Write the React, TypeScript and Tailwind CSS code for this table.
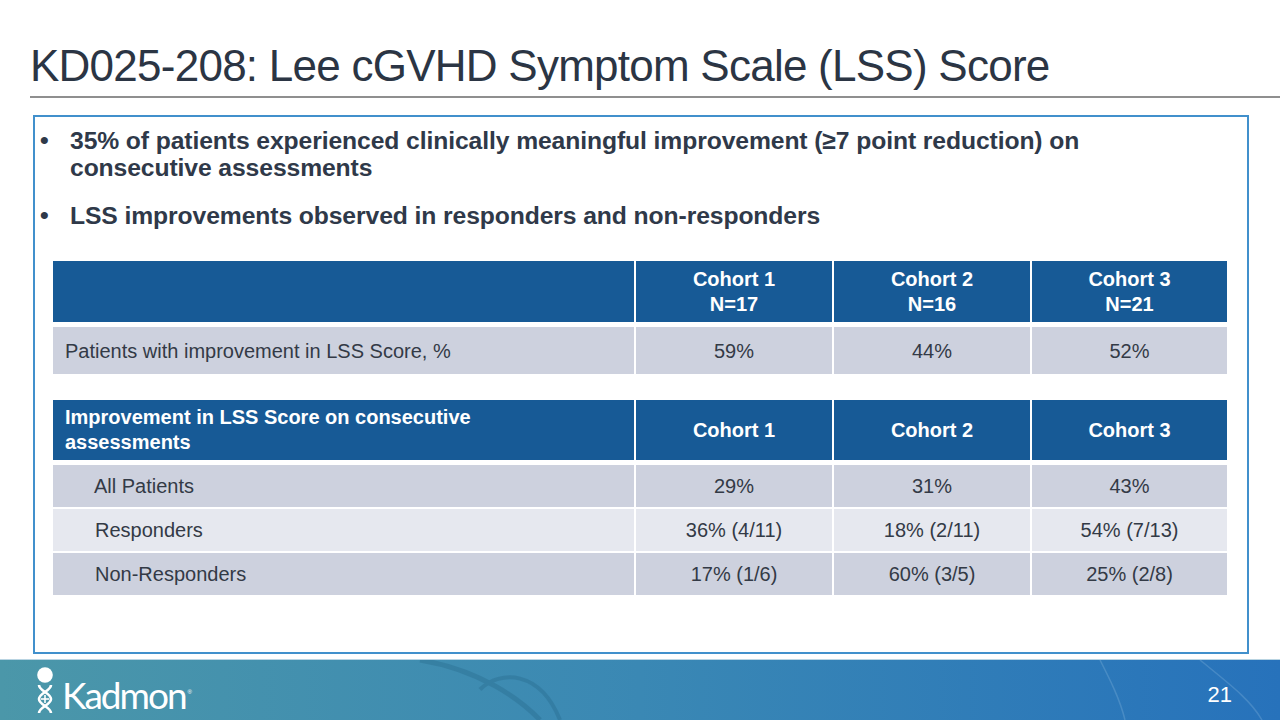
import React from 'react';

const font = { fontFamily: '"Liberation Sans", Arial, sans-serif' };

function KadmonLogo() {
  return (
    <div className="flex items-end gap-[9px]">
      <svg width="16" height="46" viewBox="0 0 16 46" fill="none">
        <circle cx="8" cy="8" r="7.8" fill="white" />
        <path d="M2 18 C2 24, 14 26, 14 32 C14 38, 2 40, 2 46" stroke="white" strokeWidth="2.6" />
        <path d="M14 18 C14 24, 2 26, 2 32 C2 38, 14 40, 14 46" stroke="white" strokeWidth="2.6" />
        <line x1="4" y1="32" x2="12" y2="32" stroke="white" strokeWidth="1.6" />
        <line x1="8" y1="28" x2="8" y2="36" stroke="white" strokeWidth="1.6" />
      </svg>
      <div className="flex items-start">
        <span
          className="text-[37px] leading-none text-white font-normal tracking-[-2px]"
          style={{ fontFamily: 'Lato, "Liberation Sans", sans-serif' }}
        >
          Kadmon
        </span>
        <span className="text-[6px] text-white mt-[12px] ml-[2px]">®</span>
      </div>
    </div>
  );
}

function Cell({ children, className = '' }: { children: React.ReactNode; className?: string }) {
  return <div className={`flex items-center ${className}`}>{children}</div>;
}

export default function App() {
  const cols = 'grid grid-cols-[581px_196px_196px_195px] gap-x-[2px]';
  const rows2 = [
    { label: 'All Patients', vals: ['29%', '31%', '43%'], bg: 'bg-[#cdd1de]', pad: 'pl-[41px]' },
    { label: 'Responders', vals: ['36% (4/11)', '18% (2/11)', '54% (7/13)'], bg: 'bg-[#e6e8ef]', pad: 'pl-[42px]' },
    { label: 'Non-Responders', vals: ['17% (1/6)', '60% (3/5)', '25% (2/8)'], bg: 'bg-[#cdd1de]', pad: 'pl-[42px]' },
  ];

  return (
    <div className="w-[1280px] h-[720px] bg-white flex flex-col overflow-hidden" style={font}>
      {/* title */}
      <div className="pl-[30px] pt-[44px]">
        <h1 className="text-[44px] leading-[44px] text-[#2b3544] tracking-[-0.75px]">
          KD025-208: Lee cGVHD Symptom Scale (LSS) Score
        </h1>
      </div>
      <div className="ml-[30px] mt-[8px] h-[2px] bg-[#8f8f8f]" />

      {/* content box */}
      <div className="ml-[33px] mt-[17px] w-[1216px] h-[539px] border-2 border-[#4190cc] pl-[18px] pt-[10px]">
        <ul className="text-[24.7px] font-bold text-[#2f3949] leading-[27px] -ml-[15px] tracking-[-0.1px]">
          <li className="flex">
            <span className="w-[32px] pl-[2px]">•</span>
            <span>
              35% of patients experienced clinically meaningful improvement (≥7 point reduction) on
              <br />
              consecutive assessments
            </span>
          </li>
          <li className="flex mt-[21px]">
            <span className="w-[32px] pl-[2px]">•</span>
            <span>LSS improvements observed in responders and non-responders</span>
          </li>
        </ul>

        {/* table 1 */}
        <div className="mt-[32px] text-[20px] text-[#333a46]">
          <div className={`${cols} h-[61px] text-white font-bold leading-[25px]`}>
            <div className="bg-[#175a96]" />
            {[
              ['Cohort 1', 'N=17'],
              ['Cohort 2', 'N=16'],
              ['Cohort 3', 'N=21'],
            ].map(([a, b]) => (
              <Cell key={a} className="bg-[#175a96] flex-col justify-center text-center">
                <span>{a}</span>
                <span>{b}</span>
              </Cell>
            ))}
          </div>
          <div className={`${cols} h-[47px] mt-[5px]`}>
            <Cell className="bg-[#cdd1de] pl-[12px]">Patients with improvement in LSS Score, %</Cell>
            {['59%', '44%', '52%'].map((v) => (
              <Cell key={v} className="bg-[#cdd1de] justify-center">
                {v}
              </Cell>
            ))}
          </div>
        </div>

        {/* table 2 */}
        <div className="mt-[26px] text-[20px] text-[#333a46] flex flex-col gap-y-[2px]">
          <div className={`${cols} h-[60px] text-white font-bold leading-[25px] mb-[3px]`}>
            <Cell className="bg-[#175a96] pl-[12px]">
              Improvement in LSS Score on consecutive
              <br />
              assessments
            </Cell>
            {['Cohort 1', 'Cohort 2', 'Cohort 3'].map((c) => (
              <Cell key={c} className="bg-[#175a96] justify-center">
                {c}
              </Cell>
            ))}
          </div>
          {rows2.map((r) => (
            <div key={r.label} className={`${cols} h-[42px]`}>
              <Cell className={`${r.bg} ${r.pad}`}>{r.label}</Cell>
              {r.vals.map((v, i) => (
                <Cell key={i} className={`${r.bg} justify-center`}>
                  {v}
                </Cell>
              ))}
            </div>
          ))}
        </div>
      </div>

      {/* footer */}
      <div className="mt-[5px] flex-1 relative bg-gradient-to-r from-[#4b97a9] via-[#3a88b4] to-[#2772bb] border-t border-[#b9d4e2] flex items-center justify-between pl-[37px] pr-[48px]">
        <svg className="absolute inset-0 w-full h-full opacity-25" viewBox="0 0 1280 61" preserveAspectRatio="none" fill="none">
          <path d="M420 0 C 480 10, 520 40, 540 61" stroke="#1c5a7a" strokeWidth="5" />
          <path d="M480 30 C 500 10, 540 10, 560 61" stroke="#1c5a7a" strokeWidth="4" />
          <path d="M1100 0 C 1110 20, 1120 40, 1125 61" stroke="#9cc6e6" strokeWidth="1.5" />
          <path d="M1200 0 C 1230 25, 1250 40, 1262 61" stroke="#9cc6e6" strokeWidth="1.5" />
        </svg>
        <div className="relative">
          <KadmonLogo />
        </div>
        <span className="relative text-white text-[22px] mt-[8px]">21</span>
      </div>
    </div>
  );
}
